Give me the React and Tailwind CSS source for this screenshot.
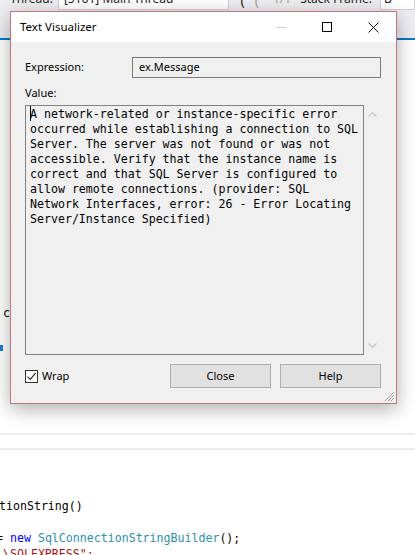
const ui = { fontFamily: '"Segoe UI", "Noto Sans", sans-serif' };
const mono = { fontFamily: '"DejaVu Sans Mono", "Liberation Mono", monospace' };

const valueLines = [
  "network-related or instance-specific error",
  "occurred while establishing a connection to SQL",
  "Server. The server was not found or was not",
  "accessible. Verify that the instance name is",
  "correct and that SQL Server is configured to",
  "allow remote connections. (provider: SQL",
  "Network Interfaces, error: 26 - Error Locating",
  "Server/Instance Specified)",
];

function Chevron({ down }) {
  return (
    <svg width="9" height="6" viewBox="0 0 9 6" className="block">
      <path
        d={down ? "M0.5 0.5 L4.5 4.5 L8.5 0.5" : "M0.5 5.5 L4.5 1.5 L8.5 5.5"}
        fill="none"
        stroke="#c4c4c4"
        strokeWidth="1.2"
      />
    </svg>
  );
}

function TextVisualizer() {
  return (
    <div
      className="absolute left-[10px] top-[11px] w-[387px] h-[393px] border border-[#c7737c] bg-[#f0f0f0] shadow-[0_5px_18px_rgba(0,0,0,0.32)] flex flex-col"
      style={ui}
    >
      <div className="h-[30px] bg-white flex items-center">
        <span className="pl-[9px] text-[11.5px] text-black">Text Visualizer</span>
        <div className="ml-auto flex h-full">
          <div className="w-[46px] flex items-center justify-center">
            <div className="w-[10px] h-px bg-[#cfcfcf]" />
          </div>
          <div className="w-[46px] flex items-center justify-center">
            <div className="w-[10px] h-[10px] border border-black" />
          </div>
          <div className="w-[46px] flex items-center justify-center">
            <svg width="11" height="11" viewBox="0 0 11 11">
              <path d="M0.5 0.5 L10.5 10.5 M10.5 0.5 L0.5 10.5" stroke="#111" strokeWidth="1" />
            </svg>
          </div>
        </div>
      </div>

      <div className="relative flex-1 pl-[14px] pr-[14px]">
        <div className="flex items-center mt-[15px]">
          <span className="w-[107px] text-[11px] text-black">Expression:</span>
          <div className="w-[249px] h-[21px] border border-[#7a7a7a] bg-[#f0f0f0] flex items-center pl-[6px] text-[11px] text-black">
            ex.Message
          </div>
        </div>

        <div className="mt-[7px] text-[11px] leading-[15px] text-black">Value:</div>

        <div className="mt-[5px] flex">
          <div
            className="w-[339px] h-[250px] border border-[#828282] bg-[#f0f0f0] pl-[4px] pt-[1px] text-[11.6px] leading-[15px] text-black"
            style={mono}
          >
            {valueLines.map((line, i) => (
              <div key={i} className="whitespace-pre">
                {i === 0 ? (
                  <>
                    <span className="relative">
                      <span className="absolute left-0 top-[-1px] h-[15px] w-px bg-black" />A
                    </span>{" "}
                  </>
                ) : null}
                {line}
              </div>
            ))}
          </div>
          <div className="w-[17px] h-[250px] flex flex-col items-center justify-between pt-[6px] pb-[6px]">
            <Chevron />
            <Chevron down />
          </div>
        </div>

        <div className="mt-[9px] flex items-center h-[24px]">
          <div className="w-[13px] h-[13px] border border-[#333] bg-white flex items-center justify-center">
            <svg width="11" height="11" viewBox="0 0 11 11">
              <path d="M1.5 5.5 L4.2 8.4 L9.6 2.2" fill="none" stroke="#222" strokeWidth="1.1" />
            </svg>
          </div>
          <span className="ml-[4px] text-[11px] text-black">Wrap</span>
          <div className="ml-auto flex gap-[9px] pr-px">
            <button className="w-[101px] h-[24px] border border-[#adadad] bg-[#e1e1e1] text-[11px] text-black">
              Close
            </button>
            <button className="w-[101px] h-[24px] border border-[#adadad] bg-[#e1e1e1] text-[11px] text-black">
              Help
            </button>
          </div>
        </div>

        <svg width="10" height="10" viewBox="0 0 10 10" className="absolute right-px bottom-px">
          <path d="M9 3 L3 9 M9 6 L6 9 M9 0 L0 9" stroke="#a0a0a0" strokeWidth="1" />
        </svg>
      </div>
    </div>
  );
}

export default function App() {
  return (
    <div className="relative w-[415px] h-[555px] overflow-hidden bg-white">
      <div className="h-[38px] bg-[#eeeef2] overflow-hidden" style={ui}>
        <div className="flex items-center h-[22px] -mt-[12px] text-[12px] text-[#1e1e1e] whitespace-nowrap">
          <span className="ml-[10px]">Thread:</span>
          <div className="ml-[5px] w-[198px] h-[22px] border border-[#cccedb] bg-white flex items-center pl-[5px]">
            [5161] Main Thread
          </div>
          <span className="ml-[12px] text-[14px]">(</span>
          <span className="ml-[10px] text-[14px] text-[#a0a0a0]">(</span>
          <span className="ml-[14px] text-[#a0a0a0]">1/1</span>
          <span className="ml-[9px]">Stack Frame:</span>
          <div className="ml-[8px] w-[40px] h-[22px] border border-[#cccedb] bg-white pl-[3px] flex items-center">
            B
          </div>
        </div>
      </div>
      <div className="h-[2px] bg-[#007acc]" />

      <div className="h-[393px] text-[11.6px] leading-[16px] text-black" style={mono}>
        <div className="pt-[265px] ml-[-4px] whitespace-pre"> c</div>
        <div className="mt-[24px] w-[3px] h-[6px] bg-[#1e7ad6]" />
      </div>
      <div className="h-[2px] bg-[#ededed]" />
      <div className="h-[13px]" />
      <div className="h-[2px] bg-[#ededed]" />

      <div className="pt-[48px] ml-[-4px] text-[11.6px] leading-[16px] text-black" style={mono}>
        <div className="whitespace-pre pl-[3px]">tionString()</div>
        <div className="h-[16px]" />
        <div className="whitespace-pre">
          = <span className="text-[#0000ff]">new</span>{" "}
          <span className="text-[#2b91af]">SqlConnectionStringBuilder</span>();
        </div>
        <div className="whitespace-pre text-[#a31515]">{' \\SQLEXPRESS";'}</div>
      </div>

      <TextVisualizer />
    </div>
  );
}
